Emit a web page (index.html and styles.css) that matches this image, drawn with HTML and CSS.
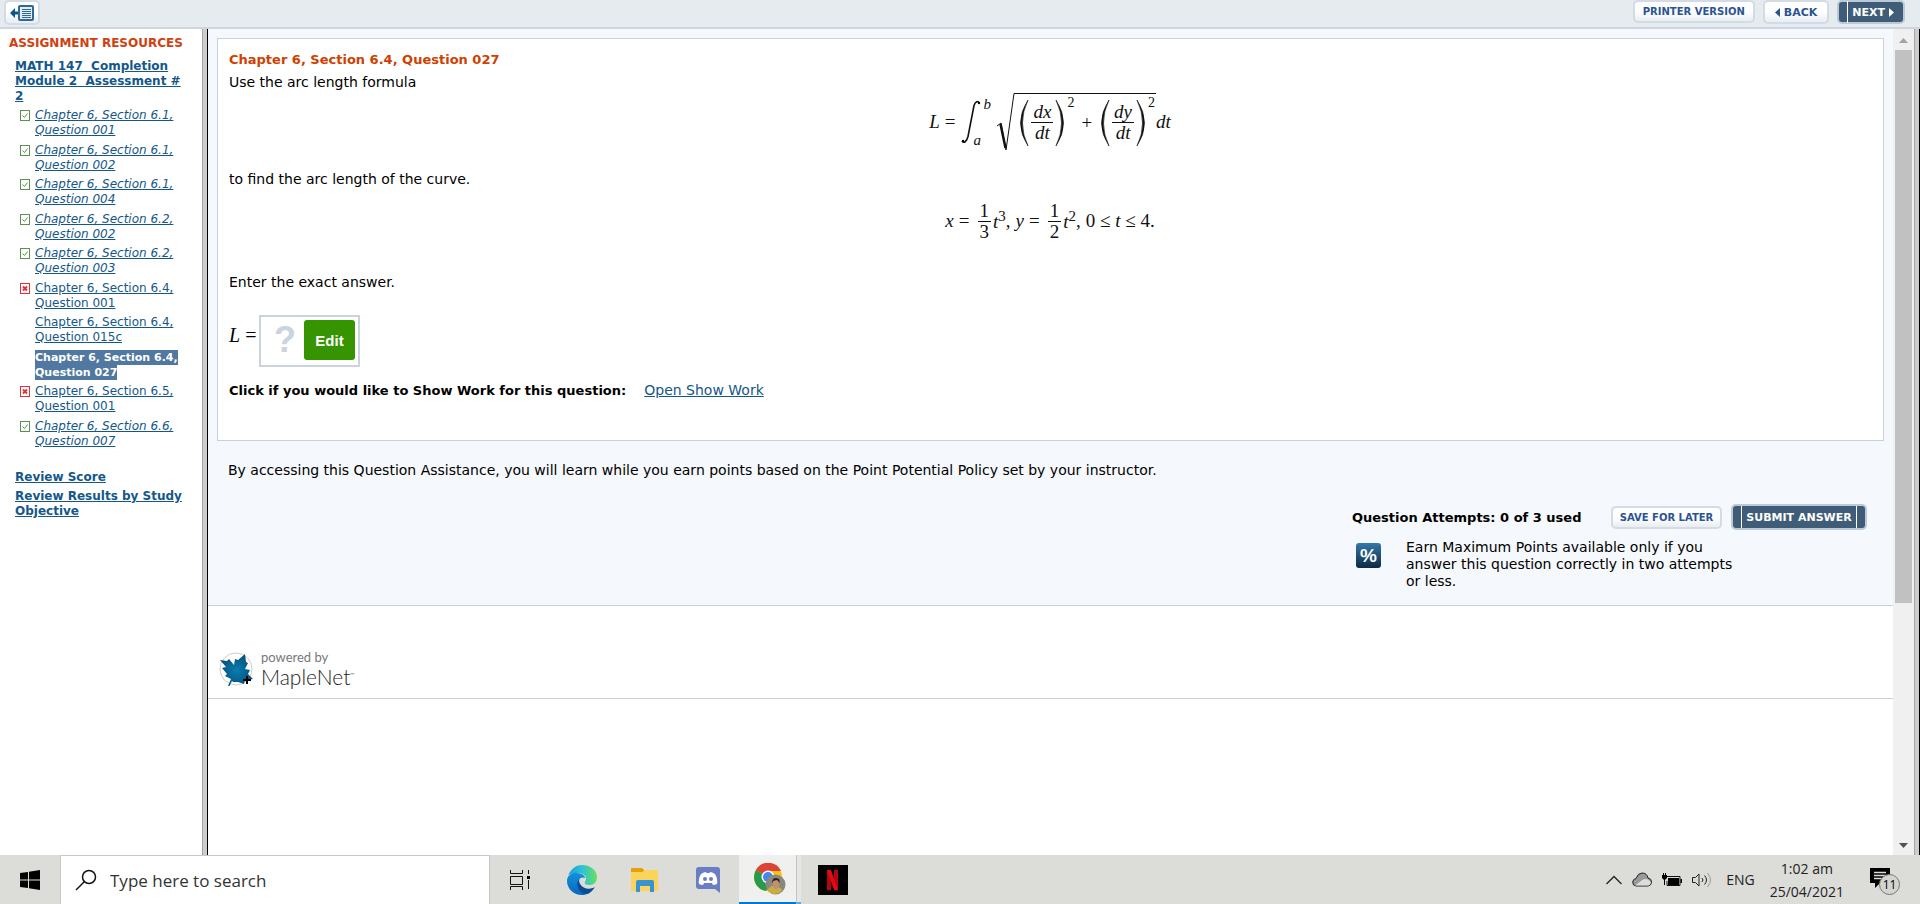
FILE: index.html
```html
<!DOCTYPE html>
<html lang="en">
<head>
    <meta charset="UTF-8">
    <meta name="viewport" content="width=device-width, initial-scale=1.0">
    <title>Chapter 6, Section 6.4, Question 027</title>
    <link rel="stylesheet" href="styles.css">
</head>
<body>

    <header class="topbar">
        <button class="btn toggle" aria-label="Hide resources">
            <svg width="24" height="16" viewBox="0 0 24 16">
                <path d="M0 8l5-5v3.500h4v3H5V13z" fill="#0b568c"/>
                <rect x="9" y="1" width="14" height="14" rx="1" fill="#e4ecf2" stroke="#2c6a9c" stroke-width="2"/>
                <path d="M12 4.500h9M12 6.500h9M12 8.500h9M12 10.500h9M12 12.500h9" stroke="#2c6a9c"/>
            </svg>
        </button>
        <div class="topbar-buttons">
            <button class="btn small">PRINTER VERSION</button>
            <button class="btn back"><svg width="5" height="9" viewBox="0 0 5 9"><path d="M5 0v9L0 4.500z" fill="currentColor"/></svg> BACK</button>
            <button class="btn dark next">NEXT <svg width="5" height="9" viewBox="0 0 5 9"><path d="M0 0v9l5-4.500z" fill="currentColor"/></svg></button>
        </div>
    </header>

    <div class="frames">
        <nav class="sidebar">
            <h2>ASSIGNMENT RESOURCES</h2>
            <a class="main-link" href="#">MATH 147&nbsp; Completion<br>Module 2&nbsp; Assessment #<br>2</a>
            <ul class="questions">
                <li class="right"><svg class="mark" viewBox="0 0 10 11"><rect x=".5" y=".5" width="9" height="10"/><path d="M2.500 5.500l2 2 3-4"/></svg><a href="#">Chapter 6, Section 6.1, Question 001</a></li>
                <li class="right"><svg class="mark" viewBox="0 0 10 11"><rect x=".5" y=".5" width="9" height="10"/><path d="M2.500 5.500l2 2 3-4"/></svg><a href="#">Chapter 6, Section 6.1, Question 002</a></li>
                <li class="right"><svg class="mark" viewBox="0 0 10 11"><rect x=".5" y=".5" width="9" height="10"/><path d="M2.500 5.500l2 2 3-4"/></svg><a href="#">Chapter 6, Section 6.1, Question 004</a></li>
                <li class="right"><svg class="mark" viewBox="0 0 10 11"><rect x=".5" y=".5" width="9" height="10"/><path d="M2.500 5.500l2 2 3-4"/></svg><a href="#">Chapter 6, Section 6.2, Question 002</a></li>
                <li class="right"><svg class="mark" viewBox="0 0 10 11"><rect x=".5" y=".5" width="9" height="10"/><path d="M2.500 5.500l2 2 3-4"/></svg><a href="#">Chapter 6, Section 6.2, Question 003</a></li>
                <li class="wrong"><svg class="mark" viewBox="0 0 10 11"><rect x=".5" y=".5" width="9" height="10"/><path d="M3 3.500l4 4M7 3.500l-4 4"/></svg><a href="#">Chapter 6, Section 6.4, Question 001</a></li>
                <li><span class="mark"></span><a href="#">Chapter 6, Section 6.4, Question 015c</a></li>
                <li class="current"><span class="mark"></span><a href="#"><span>Chapter 6, Section 6.4, Question 027</span></a></li>
                <li class="wrong"><svg class="mark" viewBox="0 0 10 11"><rect x=".5" y=".5" width="9" height="10"/><path d="M3 3.500l4 4M7 3.500l-4 4"/></svg><a href="#">Chapter 6, Section 6.5, Question 001</a></li>
                <li class="right"><svg class="mark" viewBox="0 0 10 11"><rect x=".5" y=".5" width="9" height="10"/><path d="M2.500 5.500l2 2 3-4"/></svg><a href="#">Chapter 6, Section 6.6, Question 007</a></li>
            </ul>
            <a class="main-link" href="#">Review Score</a>
            <a class="main-link" href="#">Review Results by Study Objective</a>
        </nav>

        <main class="content">
            <section class="question-area">
                <div class="card">
                    <h1>Chapter 6, Section 6.4, Question 027</h1>
                    <p>Use the arc length formula</p>

                    <div class="formula arc">
                        <i>L</i><span class="equals">=</span>
                        <svg class="integral" width="20" height="44" viewBox="0 0 20 44"><path d="M18.500 3.500C17 .5 14.500 1 13 5.500L7 36.500C5.500 42 3 43.500 1 41" fill="none" stroke="#111" stroke-width="1.600"/><circle cx="18" cy="3" r="1.200"/><circle cx="2" cy="41" r="1.200"/></svg>
                        <span class="limits"><i class="upper">b</i><i class="lower">a</i></span>
                        <svg width="18" height="58" viewBox="0 0 18 58"><path d="M0 33l4-3 5 27L17 .5h1" fill="none" stroke="#111"/><path d="M3.500 31l5 24" stroke="#111" stroke-width="2.500"/></svg>
                        <span class="radicand">
                            <svg width="10" height="46" viewBox="0 0 10 46"><path d="M9 0Q-6 23 9 46Q-2 23 9 0z" fill="#111" stroke="#111" stroke-width=".6"/></svg>
                            <span class="frac"><i>dx</i><i>dt</i></span>
                            <svg width="10" height="46" viewBox="0 0 10 46"><path d="M1 0Q16 23 1 46Q12 23 1 0z" fill="#111" stroke="#111" stroke-width=".6"/></svg>
                            <span class="power">2</span>
                            <span class="plus">+</span>
                            <svg width="10" height="46" viewBox="0 0 10 46"><path d="M9 0Q-6 23 9 46Q-2 23 9 0z" fill="#111" stroke="#111" stroke-width=".6"/></svg>
                            <span class="frac"><i>dy</i><i>dt</i></span>
                            <svg width="10" height="46" viewBox="0 0 10 46"><path d="M1 0Q16 23 1 46Q12 23 1 0z" fill="#111" stroke="#111" stroke-width=".6"/></svg>
                            <span class="power">2</span>
                        </span>
                        <i>dt</i>
                    </div>

                    <p>to find the arc length of the curve.</p>

                    <div class="formula curve">
                        <i>x</i><span class="equals">=</span><span class="frac"><span>1</span><span>3</span></span><span class="term"><i>t</i><sup>3</sup></span><span>,</span>
                        <i class="gap">y</i><span class="equals">=</span><span class="frac"><span>1</span><span>2</span></span><span class="term"><i>t</i><sup>2</sup></span><span>,</span>
                        <span class="gap">0 ≤ <i>t</i> ≤ 4.</span>
                    </div>

                    <p>Enter the exact answer.</p>

                    <div class="answer">
                        <span class="answer-label"><i>L</i> =</span>
                        <div class="answer-box">
                            <span class="placeholder">?</span>
                            <button class="edit">Edit</button>
                        </div>
                    </div>

                    <p class="show-work"><b>Click if you would like to Show Work for this question:</b><a href="#">Open Show Work</a></p>
                </div>

                <p class="policy">By accessing this Question Assistance, you will learn while you earn points based on the Point Potential Policy set by your instructor.</p>

                <div class="attempts">
                    <div class="attempts-row">
                        <b>Question Attempts: 0 of 3 used</b>
                        <button class="btn small save">SAVE FOR LATER</button>
                        <button class="btn dark submit">SUBMIT ANSWER</button>
                    </div>
                    <div class="points">
                        <span class="percent">%</span>
                        <p>Earn Maximum Points available only if you answer this question correctly in two attempts or less.</p>
                    </div>
                </div>
            </section>

            <footer class="maple">
                <svg width="34" height="34" viewBox="0 0 34 34">
                    <defs><radialGradient id="leaf"><stop offset="0" stop-color="#087eb0"/><stop offset="1" stop-color="#08507c"/></radialGradient></defs>
                    <circle cx="17" cy="17" r="16" fill="none" stroke="#ccc"/>
                    <path d="M1 8l7 1 2-2 5 6 1-6 3 1 7-6 1 8 2 1-3 6 5 1-2 4 5 5-8 1-1 4-6-2-5 0-1-1-3 6-1-1 3-7-6-3 2-2-5-6 4-1z" fill="url(#leaf)"/>
                    <path d="M28 24v8M24 28h8" stroke="#000" stroke-width="2"/>
                </svg>
                <div class="maple-text">
                    <span class="powered">powered by</span>
                    <span class="maple-name">MapleNet<small>™</small></span>
                </div>
            </footer>
        </main>

        <div class="scrollbar">
            <svg class="arrow" viewBox="0 0 9 5"><path d="M0 5l4.500-5L9 5z" fill="#a3a3a3"/></svg>
            <div class="thumb"></div>
            <svg class="arrow down" viewBox="0 0 9 5"><path d="M0 0l4.500 5L9 0z" fill="#505050"/></svg>
        </div>
    </div>

    <div class="taskbar">
        <button class="task start" aria-label="Start">
            <svg width="20" height="20" viewBox="0 0 20 20"><path d="M0 3l8-1v7.500H0zM9 1.800L20 0v9.500H9zM0 10.500h8V18l-8-1zM9 10.500h11V20L9 18.200z"/></svg>
        </button>
        <label class="search">
            <svg width="22" height="22" viewBox="0 0 22 22"><circle cx="14" cy="8" r="6.500" fill="none" stroke="#111" stroke-width="1.500"/><path d="M9.500 12.500L1 21" stroke="#111" stroke-width="1.500"/></svg>
            <input type="text" placeholder="Type here to search">
        </label>
        <button class="task view" aria-label="Task View">
            <svg width="20" height="20" viewBox="0 0 20 20"><path d="M.5 0v3.500h12V0M.5 20v-3.500h12V20M.5 6.500h12v8H.5zM18.500 0v4M18.500 10v9" fill="none" stroke="#111"/><path d="M17 6h3v3h-3z"/></svg>
        </button>
        <button class="task" aria-label="Edge">
            <svg width="30" height="30" viewBox="0 0 30 30">
                <defs>
                    <linearGradient id="edge-top"><stop offset="0" stop-color="#1c9fdb"/><stop offset=".5" stop-color="#2cc4d4"/><stop offset="1" stop-color="#6ae05a"/></linearGradient>
                    <linearGradient id="edge-side" x2="0" y2="1"><stop offset="0" stop-color="#1292dc"/><stop offset="1" stop-color="#0a66bd"/></linearGradient>
                </defs>
                <path d="M1 11C4 3 10 0 15 0c9 0 15 6 15 12 0 5-3 8-7 8-4 0-6-1-5-3 3-5-1-9-7-9C6 8 2 9 1 11z" fill="url(#edge-top)"/>
                <path d="M0 16C0 10 6 7 10 8c5 0 8 3 8 5-5-2-7 2-5 6 2 5 8 7 14 4-3 5-7 7-12 7C7 30 0 24 0 16z" fill="url(#edge-side)"/>
                <path d="M12 14c-4 5-1 14 7 15 4-1 7-4 9-7-5 3-12 2-15-3-1-2-2-3-1-5z" fill="#0c4c94"/>
            </svg>
        </button>
        <button class="task" aria-label="File Explorer">
            <svg width="28" height="24" viewBox="0 0 28 24"><path d="M0 1q0-1 1-1h10l2 2v4H0z" fill="#e3a008"/><path d="M0 4h11l3-2h12q1 0 1 1v20H0z" fill="#fdd45a"/><path d="M5 24V14q0-2 2-2h14q2 0 2 2v10h-4v-6H9v6z" fill="#3794d3"/></svg>
        </button>
        <button class="task" aria-label="Discord">
            <svg width="24" height="26" viewBox="0 0 24 26"><path d="M3 0h18q3 0 3 3v23l-5-4H3q-3 0-3-3V3q0-3 3-3z" fill="#697ec4"/><path d="M5 7q3-2 5-2l.5 1h3L14 5q2 0 5 2 3 5 2 10-2 1-4 1l-1-2H8l-1 2q-2 0-4-1-1-5 2-10z" fill="#fff"/><circle cx="9" cy="12" r="2" fill="#697ec4"/><circle cx="15" cy="12" r="2" fill="#697ec4"/></svg>
        </button>
        <button class="task active" aria-label="Chrome">
            <svg width="32" height="32" viewBox="0 0 32 32">
                <circle cx="14" cy="14" r="14" fill="#fbc116"/>
                <path d="M14 14L2 7A14 14 0 0 0 12 28l6-10z" fill="#279b4b"/>
                <path d="M14 14L2 7a14 14 0 0 1 25 1H14z" fill="#dc4437"/>
                <circle cx="14" cy="14" r="6.500" fill="#fff"/><circle cx="14" cy="14" r="5" fill="#4286f4"/>
                <circle cx="21.500" cy="21.500" r="10" fill="#8c877c"/>
                <path d="M13 27q4-4 5-4l6 1q4 1 4 4a10 10 0 0 1-15-1z" fill="#c9ae42"/>
                <ellipse cx="22" cy="21" rx="3.500" ry="5" fill="#c28f70"/><path d="M18 19q1-6 7-3l1 4-3-3-4 1v2z" fill="#28231f"/>
            </svg>
        </button>
        <span class="stacked"></span>
        <button class="task netflix" aria-label="Netflix">
            <svg width="30" height="30" viewBox="0 0 30 30"><path d="M0 0h30v30H0z"/><path d="M9 5h4v20l-4 .5zM16 5h4v20l-4-.5z" fill="#b20710"/><path d="M9 5h4l7 20.500-4-.5z" fill="#e50914"/></svg>
        </button>

        <div class="tray">
            <svg width="16" height="10" viewBox="0 0 16 10"><path d="M.5 9L8 1.500 15.500 9" fill="none" stroke="#222" stroke-width="1.300"/></svg>
            <svg width="20" height="15" viewBox="0 0 20 15"><path d="M4 14Q.5 13.500.7 10 1 7 4 6.500 6 1 10 1q5 0 6 5 3.500.5 3.500 4T16 14z" fill="#999" stroke="#222"/><path d="M3 13.500l8-6q5-2 8 3-1 3-3 3z" fill="#ddd"/></svg>
            <svg width="20" height="14" viewBox="0 0 20 14"><path d="M5 3.500h13v9H5V8" fill="none" stroke="#111"/><path d="M6 5h11v7H6zM18.500 6H20v4h-1.500zM0 2h5v3L3 7v5H2V7L0 5zM1 0h1v2H1zM3 0h1v2H3z"/></svg>
            <svg width="20" height="16" viewBox="0 0 20 16"><path d="M.5 5.500h3L7 2v12l-3.500-3.500h-3zM10 6q2 2 0 4M12.500 3.500q4 4.500 0 9" fill="none" stroke="#222"/><path d="M15.500 1q6 7 0 14" fill="none" stroke="#999"/></svg>
            <span class="lang">ENG</span>
            <div class="clock"><span>1:02 am</span><span>25/04/2021</span></div>
            <button class="notify" aria-label="Notifications">
                <svg width="20" height="20" viewBox="0 0 20 20"><path d="M0 0h20v15H10l-5 5v-5H0z"/><path d="M4 4.500h12M4 7.500h12M4 10.500h8" stroke="#ddd" stroke-width="1.300"/></svg>
                <span class="badge">11</span>
            </button>
        </div>
    </div>

</body>
</html>
```
FILE: styles.css
```css
* {
    box-sizing: border-box;
}

body {
    display: flex;
    flex-direction: column;
    height: 100vh;
    margin: 0;
    font-family: Verdana, "DejaVu Sans", sans-serif;
    font-size: 14px;
    color: #000;
    background: #fff;
}

h1, h2, p, ul {
    margin: 0;
    padding: 0;
}
button {
    font-family: inherit;
}
a {
    color: #14578a;
}
svg {
    flex: none;
}

/* top bar */
.topbar {
    display: flex;
    justify-content: space-between;
    align-items: flex-start;
    height: 29px;
    padding: 0 15px 0 4px;
    background: #e6ebef;
    border-bottom: 2px solid #cdd6e0;
}
.topbar-buttons {
    display: flex;
    gap: 8px;
}
.btn {
    display: flex;
    align-items: center;
    justify-content: center;
    gap: 4px;
    height: 24px;
    padding: 0 10px;
    border: 2px solid #d3dbe5;
    border-radius: 5px;
    background: linear-gradient(#fff 50%, #e9edf1);
    color: #2a5394;
    font-size: 11px;
    font-weight: bold;
    white-space: nowrap;
}
.btn.small {
    height: 23px;
    padding: 0 8px;
    font-size: 10px;
}
.btn.toggle {
    width: 36px;
    height: 25px;
    padding: 0;
}
.btn.dark {
    background: #3f5d78;
    border-color: #bccad8;
    color: #fff;
}
.btn.next {
    padding: 0 9px 0 0;
}
.btn.next::before {
    content: "";
    width: 1px;
    height: 22px;
    margin-left: 8px;
    background: #fff;
}

/* frames */
.frames {
    display: flex;
    flex: 1;
    min-height: 0;
    border-right: 1px solid #000;
}
.sidebar {
    flex: none;
    width: 208px;
    padding: 6px 8px 0 9px;
    border-right: 1px solid #000;
    box-shadow: inset -4px 0 #cdcdcd, inset -5px 0 #a5a5a5;
    font-size: 12px;
    line-height: 15px;
}
.sidebar h2 {
    color: #d04010;
    font-size: 12px;
    line-height: 17px;
    white-space: nowrap;
}
.main-link {
    display: block;
    margin: 7px 0 4px 6px;
    font-weight: bold;
}
.main-link + .main-link {
    margin-top: 4px;
}
.questions {
    margin-bottom: 21px;
    list-style: none;
}
.questions li {
    display: flex;
    gap: 5px;
    margin: 0 0 4px 11px;
}
.questions li:nth-child(odd) {
    margin-bottom: 5px;
}
.questions a {
    width: 154px;
}
.mark {
    flex: none;
    width: 10px;
    height: 11px;
    margin-top: 2px;
    fill: none;
    stroke: #5d9150;
}
.right a {
    font-style: italic;
}
.wrong .mark {
    stroke: #e0333c;
}
.wrong .mark path {
    stroke-width: 2;
}
.current a {
    color: #fff;
    font-size: 11px;
    font-weight: bold;
    text-decoration: none;
}
.current a span {
    padding: 1px 0;
    background: #5078a0;
}

/* question */
.content {
    flex: 1;
    min-width: 0;
}
.question-area {
    padding: 9px 9px 15px;
    background: #f5f8fc;
    border-bottom: 1px solid #c8d1dd;
}
.card {
    padding: 9px 12px 38px 11px;
    background: #fff;
    border: 1px solid #c8d1dd;
    line-height: 22px;
}
.card h1 {
    color: #d04000;
    font-size: 13px;
    line-height: 23px;
}
.formula {
    display: flex;
    align-items: center;
    justify-content: center;
    color: #111;
    font-family: "Liberation Serif", serif;
    font-size: 19px;
}
.arc {
    height: 58px;
    margin-bottom: 17px;
}
.curve {
    height: 40px;
    margin: 11px 0 30px;
}
.equals {
    margin: 0 6px 0 5px;
}
.limits {
    display: flex;
    flex-direction: column;
    justify-content: space-between;
    height: 52px;
    width: 16px;
    font-size: 15px;
    line-height: 16px;
}
.upper {
    margin-left: 2px;
}
.lower {
    margin-left: -8px;
}
.radicand {
    display: flex;
    align-items: center;
    height: 58px;
    padding-left: 4px;
    border-top: 1px solid #111;
}
.frac {
    display: flex;
    flex-direction: column;
    align-items: center;
    margin: 0 2px;
    line-height: 20px;
}
.frac > :first-child {
    padding: 0 2px;
    border-bottom: 1px solid #111;
}
.power {
    align-self: flex-start;
    margin: 0 1px 0 2px;
    font-size: 14px;
    line-height: 18px;
}
.plus {
    margin: 0 8px 0 6px;
}
.term sup {
    font-size: 15px;
    line-height: 1;
}
.gap {
    margin-left: 5px;
}
.answer {
    display: flex;
    align-items: flex-start;
    margin: 22px 0 12px;
}
.answer-label {
    width: 30px;
    padding-top: 9px;
    font-family: "Liberation Serif", serif;
    font-size: 20px;
    white-space: nowrap;
}
.answer-box {
    display: flex;
    align-items: center;
    height: 52px;
    padding: 0 3px 2px 13px;
    border: 2px solid #cbd3df;
}
.placeholder {
    width: 30px;
    color: #cbd3df;
    font-family: "Liberation Sans", sans-serif;
    font-size: 36px;
    font-weight: bold;
}
.edit {
    width: 51px;
    height: 40px;
    padding: 0;
    border: none;
    border-radius: 3px;
    background: #359400;
    color: #fff;
    font-family: "Liberation Sans", sans-serif;
    font-size: 15px;
    font-weight: bold;
}
.show-work b,
.attempts-row b {
    font-size: 13px;
}
.show-work a {
    margin-left: 18px;
}
.policy {
    margin: 18px 11px 0;
    line-height: 22px;
}

.attempts {
    display: flex;
    flex-direction: column;
    width: 532px;
    margin: 23px 0 0 auto;
}
.attempts-row {
    display: flex;
    align-items: center;
    height: 26px;
}
.attempts-row .save {
    width: 111px;
    margin: 0 9px 0 auto;
    padding: 0;
}
.attempts-row .submit {
    width: 136px;
    height: 26px;
    margin-right: 17px;
    padding: 0;
}
.submit::before,
.submit::after {
    content: "";
    width: 1px;
    height: 22px;
    background: #fff;
}
.points {
    display: flex;
    gap: 25px;
    margin: 9px 0 0 4px;
    line-height: 17px;
}
.points p {
    width: 340px;
}
.percent {
    width: 25px;
    height: 25px;
    margin-top: 4px;
    border-radius: 3px;
    background: linear-gradient(#3478a8, #0c2a44);
    color: #fff;
    font-family: "Liberation Sans", sans-serif;
    font-size: 19px;
    font-weight: bold;
    line-height: 25px;
    text-align: center;
}

/* MapleNet */
.maple {
    display: flex;
    align-items: center;
    gap: 8px;
    height: 93px;
    padding: 34px 11px 0;
    border-bottom: 1px solid #c8d1dd;
    font-family: Lato, sans-serif;
}
.maple-text {
    display: flex;
    flex-direction: column;
}
.powered {
    color: #777;
    font-size: 13px;
    line-height: 13px;
}
.maple-name {
    color: #222;
    font-size: 21px;
    font-weight: 300;
    line-height: 22px;
}
.maple-name small {
    font-size: 6px;
    vertical-align: super;
}

/* scroll bar */
.scrollbar {
    display: flex;
    flex-direction: column;
    flex: none;
    width: 26px;
    padding: 0 7px 0 2px;
    background: #f0f0f0;
    box-shadow: inset -4px 0 #cdcdcd, inset -5px 0 #a5a5a5;
}
.arrow {
    width: 9px;
    height: 5px;
    margin: 9px auto 7px;
}
.arrow.down {
    margin-top: auto;
}
.thumb {
    height: 67%;
    background: #c1c1c1;
}

/* taskbar */
.taskbar {
    display: flex;
    flex: none;
    height: 49px;
    background: #dcdcd9;
    font-family: "Segoe UI", "Open Sans", sans-serif;
}
.task {
    display: flex;
    align-items: center;
    justify-content: center;
    width: 63px;
    padding: 0;
    border: none;
    background: none;
}
.task.start {
    width: 60px;
}
.task.view {
    width: 60px;
}
.task.active {
    width: 57px;
    padding-left: 5px;
    background: #f0f0ee;
    border-bottom: 2px solid #0078d7;
}
.stacked {
    width: 5px;
    background: #e6e6e4;
    border-left: 1px solid #c4c4c4;
    border-bottom: 2px solid #60a8e0;
}
.search {
    display: flex;
    align-items: center;
    gap: 13px;
    width: 430px;
    padding: 0 14px;
    background: #fff;
    border: 1px solid #c8c8c8;
    border-bottom: none;
}
.search input {
    flex: 1;
    min-width: 0;
    padding: 0;
    border: none;
    outline: none;
    font-family: inherit;
    font-size: 17px;
}
.search input::placeholder {
    color: #333;
}
.tray {
    display: flex;
    align-items: center;
    gap: 10px;
    margin-left: auto;
    padding-right: 20px;
    font-size: 14px;
    color: #222;
}
.lang {
    margin-left: 4px;
}
.clock {
    display: flex;
    flex-direction: column;
    align-items: center;
    margin-left: 5px;
    line-height: 23px;
}
.notify {
    position: relative;
    width: 30px;
    height: 30px;
    margin-left: 16px;
    padding: 0;
    border: none;
    background: none;
    text-align: left;
}
.badge {
    position: absolute;
    right: 0;
    bottom: 0;
    width: 21px;
    height: 21px;
    border: 1px solid #777;
    border-radius: 50%;
    background: #d4d4d1;
    font-size: 12px;
    line-height: 19px;
    text-align: center;
}
```
